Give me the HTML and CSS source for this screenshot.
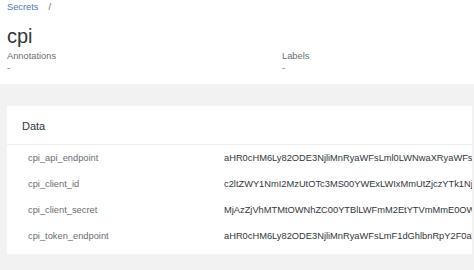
FILE: index.html
```html
<!DOCTYPE html>
<html lang="en">
<head>
    <meta charset="UTF-8">
    <meta name="viewport" content="width=device-width, initial-scale=1.0">
    <title>cpi - Secrets</title>
    <link rel="stylesheet" href="styles.css">
</head>
<body>
    <div class="header">
        <div class="breadcrumb"><a href="#">Secrets</a><span class="sep">/</span></div>
        <h1>cpi</h1>
        <div class="meta">
            <div>
                <div class="meta-label">Annotations</div>
                <div class="meta-value">-</div>
            </div>
            <div>
                <div class="meta-label">Labels</div>
                <div class="meta-value">-</div>
            </div>
        </div>
    </div>

    <div class="content">
        <!-- Data card -->
        <div class="card">
            <div class="card-title">Data</div>
            <ul class="rows">
                <li><span class="key">cpi_api_endpoint</span><span class="val">aHR0cHM6Ly82ODE3NjliMnRyaWFsLml0LWNwaXRyaWFsMDMuaXQtY3B0cmlhbDAzLmNmYXBwcy5hcDIxLmhhbmEub25kZW1hbmQuY29t</span></li>
                <li><span class="key">cpi_client_id</span><span class="val">c2ltZWY1NmI2MzUtOTc3MS00YWExLWIxMmUtZjczYTk1NjRlMmI2ZmFiMDk5</span></li>
                <li><span class="key">cpi_client_secret</span><span class="val">MjAzZjVhMTMtOWNhZC00YTBlLWFmM2EtYTVmMmE0OWUxZDQ2JFpXVkVjWGhqZVE9PQ==</span></li>
                <li><span class="key">cpi_token_endpoint</span><span class="val">aHR0cHM6Ly82ODE3NjliMnRyaWFsLmF1dGhlbnRpY2F0aW9uLmFwMjEuaGFuYS5vbmRlbWFuZC5jb20vb2F1dGgvdG9rZW4=</span></li>
            </ul>
        </div>
    </div>
</body>
</html>
```

FILE: styles.css
```css
html, body { height: 100%; }
body { margin: 0; font-family: "Liberation Sans", Arial, sans-serif; color: #32363a; background: #fff; overflow: hidden; display: flex; flex-direction: column; }

.header { padding: 1px 7px 0 7px; height: 84px; flex: none; box-sizing: border-box; }
.breadcrumb { font-size: 9.3px; line-height: 13px; }
.breadcrumb a { color: #4a7bbf; text-decoration: none; }
.sep { color: #6a6d70; margin-left: 10px; }
h1 { font-size: 20px; font-weight: normal; margin: 10px 0 0 0; line-height: 24px; color: #32363a; }
.meta { display: grid; grid-template-columns: 275px 1fr; margin-top: 2px; }
.meta-label { font-size: 9.3px; line-height: 12px; color: #6a6d70; }
.meta-value { font-size: 9.3px; line-height: 12px; color: #6a6d70; }

.content { background: #f2f2f3; padding: 22px 2px 0 7px; flex: 1; }
.card { background: #fff; padding-bottom: 5px; }
.card-title { font-size: 11px; height: 39px; line-height: 40px; padding-left: 15px; border-bottom: 1px solid #efeff0; box-sizing: border-box; }

.rows { list-style: none; margin: 0; padding: 0; }
.rows li { display: flex; height: 26px; align-items: center; font-size: 9.3px; white-space: nowrap; overflow: hidden; }
.key { width: 196px; flex: none; padding-left: 21px; color: #6a6d70; }
.val { color: #32363a; }
```
